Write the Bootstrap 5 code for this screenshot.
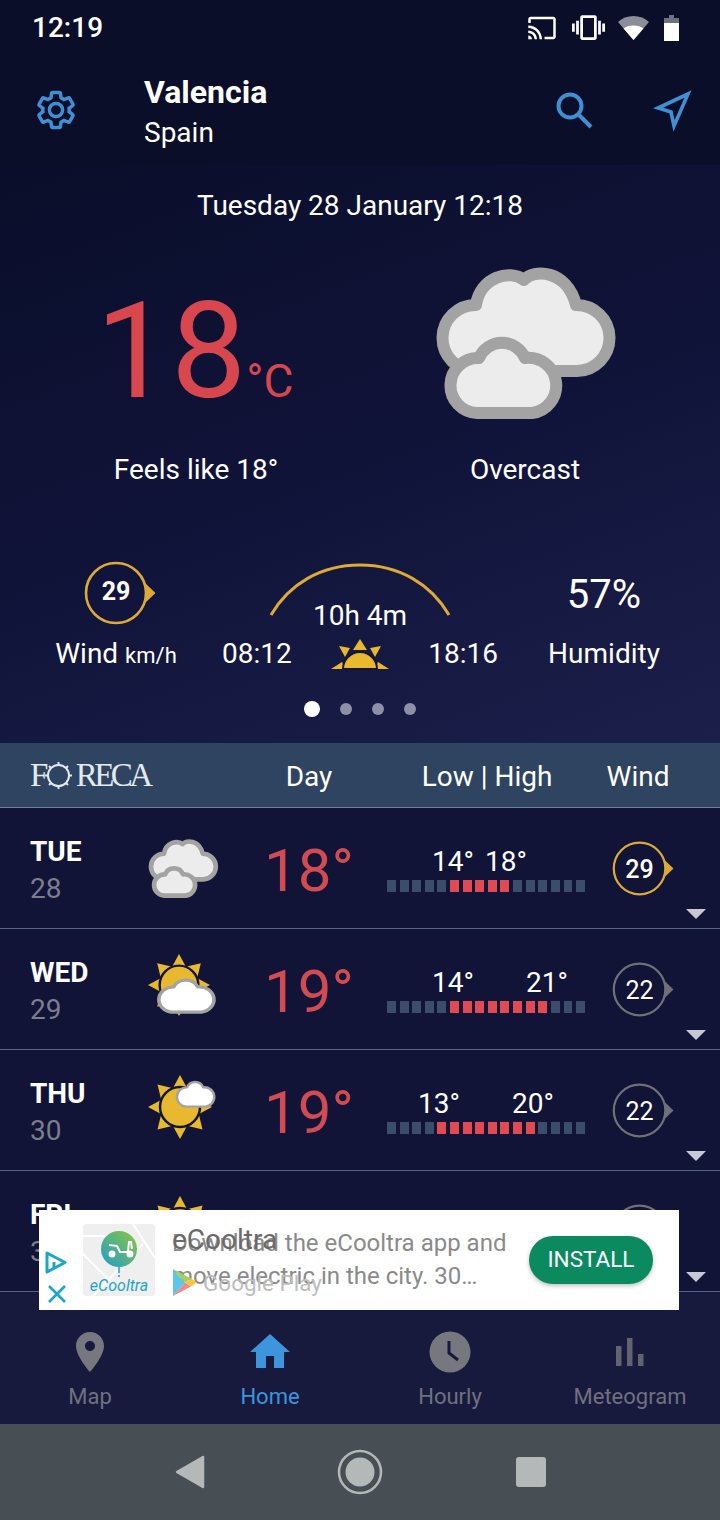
<!DOCTYPE html>
<html lang="en">
<head>
  <meta charset="UTF-8" />
  <meta name="viewport" content="width=device-width, initial-scale=1.0"/>
  <title>Foreca - Valencia</title>
  <link href="https://cdn.jsdelivr.net/npm/bootstrap@5.3.0/dist/css/bootstrap.min.css" rel="stylesheet"/>
  <style>
    body { width: 720px; height: 1520px; overflow: hidden; font-family: Roboto, "Liberation Sans", sans-serif; font-size: 28px; color: #fff; background: #14163a; }
    svg, symbol { overflow: visible; }
    .app-shell { width: 720px; height: 1520px; position: relative; background: #17193d; }
    .head-wrap { height: 165px; background: #0a0e28; }
    .status-strip { height: 55px; padding: 0 41px 0 32px; }
    .clock-text { font-weight: 500; line-height: 55px; }
    .status-icons { gap: 15px; }
    .vibrate-icon { margin-right: -2px; }
    .title-strip { height: 110px; padding: 0 0 0 34px; }
    .city-block { margin-left: 66px; margin-top: 7px; line-height: 40px; }
    .city-name { font-size: 32px; font-weight: 700; line-height: 38px; margin-top: -2px; margin-bottom: 2px; }
    .act-search { margin-right: 61px; }
    .act-locate { margin-right: 29px; }
    .hero-wrap { height: 578px; background: linear-gradient(160deg, #0a0e2a 0, #11143a 55%, #1c1f4a 100%); }
    .date-line { height: 81px; padding-top: 22px; line-height: 38px; text-align: center; }
    .now-grid { display: grid; grid-template-columns: 392px 266px; height: 244px; }
    .temp-big { font-size: 134px; line-height: 150px; font-weight: 400; color: #d9474e; margin-top: 31px; height: 176px; margin-left: -3px; white-space: nowrap; }
    .temp-unit { font-size: 46px; font-weight: 400; }
    .cloud-main { display: block; margin: 21px auto 34px; }
    .stats-grid { display: grid; grid-template-columns: 232px 256px 232px; height: 114px; padding-top: 71px; box-sizing: content-box; }
    .under-line { line-height: 34px; }
    .wind-label { margin-top: 12px; }
    .sun-block { width: 276px; margin-left: -10px; }
    .sun-arc { margin-top: 2px; }
    .sun-times { margin-top: 3px; }
    .sun-times svg { margin-bottom: 2px; }
    .day-length { margin-top: -18px; line-height: 36px; }
    .pct-text { font-size: 40px; line-height: 46px; margin-top: 11px; margin-bottom: 19px; }
    .wind-unit { font-size: 22px; }
    .pager-dots { gap: 20px; margin-top: 26px; height: 16px; }
    .pager-dot { width: 12px; height: 12px; background: #8e90a5; border-radius: 50%; }
    .pager-dot.is-on { width: 16px; height: 16px; background: #fff; }
    .table-head { height: 65px; padding-top: 4px; background: #2e4460; border-bottom: 1px solid #6d7ea3; display: grid; grid-template-columns: 232px 154px 202px 100px; align-items: center; text-align: center; }
    .foreca-logo { font-family: "Liberation Serif", serif; font-size: 33px; letter-spacing: -3.6px; padding-left: 30px; margin-top: -4px; text-align: left; line-height: 1; color: #e4e9f0; white-space: nowrap; }
    .foreca-logo svg { margin: 0 4px 0 0; vertical-align: -3px; }
    .fc-row { height: 121px; border-bottom: 1px solid #57648c; display: grid; grid-template-columns: 148px 118px 121px 225px 80px; align-items: center; position: relative; background: rgba(16, 17, 52, .7); }
    .fc-day { padding-left: 30px; line-height: 37px; margin-top: 4px; }
    .fc-day b { display: block; font-weight: 700; }
    .fc-day span { color: #7c7e8e; }
    .fc-icon-up { margin-top: -10px; }
    .fc-icon-mid { margin-top: -6px; }
    .fc-temp { font-size: 60px; color: #d04c52; line-height: 1; margin-top: 6px; margin-left: -2px; }
    .fc-range { margin-top: 2px; }
    .low-high { line-height: 36px; margin-top: -2px; display: flex; }
    .seg-bar { display: flex; gap: 3.67px; width: 198px; }
    .seg-bar i { width: 9px; height: 12px; background: #3a4e6b; display: block; }
    .seg-bar i.is-hot { background: #e04a52; }
    .wind-badge { position: relative; color: #dcaa36; display: block; }
    .wind-badge span { position: absolute; font-weight: 500; color: #fff; text-align: center; }
    .wind-lg { width: 72px; height: 64px; margin-left: 84px; }
    .wind-lg span { left: 2px; width: 60px; top: 15px; font-size: 25px; line-height: 32px; font-weight: 700; }
    .wind-sm { width: 62px; height: 55px; }
    .wind-sm span { left: 1px; width: 53px; top: 14px; font-size: 25px; line-height: 29px; }
    .wind-gray { color: #6f7078; }
    .wind-gray span { font-weight: 400; }
    .row-caret { position: absolute; right: 14px; bottom: 9px; width: 0; height: 0; border-left: 10px solid transparent; border-right: 10px solid transparent; border-top: 10px solid #c7c8d4; }
    .tab-strip { height: 132px; background: #17193d; padding-top: 36px; }
    .tab-item { width: 180px; text-align: center; font-size: 22px; color: #6f7180; line-height: 30px; }
    .tab-item svg { display: block; margin: 0 auto 6px; }
    .tab-item.is-active { color: #3d95dc; }
    .sys-strip { height: 96px; background: #484f54; gap: 132.5px; }
    .ad-box { position: absolute; left: 39px; top: 1210px; width: 640px; height: 100px; background: #fff; color: #8a8a8a; }
    .ad-box > * { position: absolute; }
    .ad-choice { left: 5px; top: 41px; }
    .ad-close { left: 8px; top: 74px; }
    .ad-art { left: 44px; top: 14px; }
    .ad-play { left: 134px; top: 59px; }
    .ad-desc { left: 133px; top: 17px; width: 340px; font-size: 24px; line-height: 33px; white-space: nowrap; }
    .ad-name { left: 133px; top: 13px; font-size: 28px; line-height: 34px; color: #6a6a6a; }
    .ad-store { left: 164px; top: 57px; font-size: 22.5px; line-height: 32px; color: #bdbdbd; }
    .ad-install { left: 490px; top: 26px; width: 124px; height: 48px; border-radius: 24px; background: #0b8a5f; color: #fff; border: 0; padding: 0; font-size: 22.5px; box-shadow: 0 2px 4px rgba(0,0,0,.25); }
  </style>
</head>
<body>
<svg width="0" height="0" class="position-absolute">
  <symbol id="cloud-big" viewBox="0 0 180 152">
    <path d="M40 104A33 33 0 0 1 41 38C45 10 75 2 89 13C98 2 132 2 141 38A33 33 0 0 1 142 104Z" fill="#ececec" stroke="#a3a3a3" stroke-width="12" stroke-linejoin="round"/>
    <path d="M42 146A27.500 27.500 0 0 1 44 91A25 25 0 0 1 90 91A27.500 27.500 0 0 1 97 146Z" fill="#ececec" stroke="#a3a3a3" stroke-width="12" stroke-linejoin="round"/>
  </symbol>
  <symbol id="cloud-one" viewBox="10 67 119 83" preserveAspectRatio="none">
    <path d="M42 146A27.500 27.500 0 0 1 44 91A25 25 0 0 1 90 91A27.500 27.500 0 0 1 97 146Z" fill="#fff" stroke="#a3a3a3" stroke-width="7" stroke-linejoin="round"/>
  </symbol>
  <symbol id="sun-rays" viewBox="0 0 64 64">
    <g fill="#e8b92f">
      <path d="M32 0l7 13H25z"/><path d="M32 64l7-13H25z"/><path d="M0 32l13-7v14z"/><path d="M64 32l-13-7v14z"/>
      <path d="M9.500 9.500l14.500 3.500-11 11z"/><path d="M54.500 9.500l-3.500 14.500L40 13z"/><path d="M9.500 54.500l3.500-14.500L24 51z"/><path d="M54.500 54.500l-14.500-3.500L51 40z"/>
    </g>
    <circle cx="32" cy="32" r="20" fill="#e8b92f" stroke="#15152f" stroke-width="2.500"/>
  </symbol>
  <symbol id="wind-mark" viewBox="0 0 72 64">
    <circle cx="32" cy="32" r="30" fill="none" stroke="currentColor" stroke-width="2.600"/>
    <path d="M60 21L71.500 32L60 43A30 30 0 0 0 60 21Z" fill="currentColor"/>
  </symbol>
</svg>

<div class="app-shell d-flex flex-column">
  <div class="head-wrap">
    <div class="status-strip d-flex justify-content-between align-items-center">
      <span class="clock-text">12:19</span>
      <div class="status-icons d-flex align-items-center">
        <svg width="30" height="30" viewBox="0 0 24 24" fill="#fff"><path d="M21 3H3c-1.100 0-2 .9-2 2v3h2V5h18v14h-7v2h7c1.100 0 2-.9 2-2V5c0-1.100-.9-2-2-2zM1 18v3h3c0-1.660-1.340-3-3-3zm0-4v2c2.760 0 5 2.240 5 5h2c0-3.870-3.130-7-7-7zm0-4v2c4.970 0 9 4.030 9 9h2c0-6.080-4.930-11-11-11z"/></svg>
        <svg class="vibrate-icon" width="33" height="33" viewBox="0 0 24 24" fill="#fff"><path d="M0 15h2V9H0v6zm3 2h2V7H3v10zm19-8v6h2V9h-2zm-3 8h2V7h-2v10zM16.500 3h-9C6.670 3 6 3.670 6 4.500v15c0 .83.670 1.500 1.500 1.500h9c.83 0 1.500-.67 1.500-1.500v-15c0-.83-.67-1.500-1.500-1.500zM16 19H8V5h8v14z"/></svg>
        <svg width="31" height="24" viewBox="0 0 31 24"><path d="M0 6C4 2 9.500 0 15.500 0S27 2 31 6L15.500 24z" fill="#8b8d99"/><path d="M5.500 12.500C8 10.500 11.500 9.500 15.500 9.500s7.500 1 10 3L15.500 24z" fill="#fff"/></svg>
        <svg width="15" height="26" viewBox="0 0 15 26"><path d="M5 0h5v3h5v5H0V3h5z" fill="#6f7180"/><path d="M0 8h15v18H0z" fill="#fff"/></svg>
      </div>
    </div>
    <div class="title-strip d-flex align-items-center">
      <svg width="44" height="44" viewBox="0 0 24 24" fill="none" stroke="#3f8fd2" stroke-width="1.900"><path d="M19.140 12.940c.04-.3.060-.61.060-.94 0-.32-.02-.64-.07-.94l2.030-1.580c.18-.14.23-.41.120-.61l-1.920-3.320c-.12-.22-.37-.29-.59-.22l-2.390.96c-.5-.38-1.030-.7-1.620-.94l-.36-2.540c-.04-.24-.24-.41-.48-.41h-3.840c-.24 0-.43.17-.47.41l-.36 2.540c-.59.24-1.130.57-1.620.94l-2.390-.96c-.22-.08-.47 0-.59.22L2.740 8.870c-.12.21-.08.47.12.61l2.030 1.580c-.05.3-.09.63-.09.94s.02.64.07.94l-2.030 1.580c-.18.14-.23.41-.12.61l1.920 3.320c.12.22.37.29.59.22l2.390-.96c.5.38 1.030.7 1.620.94l.36 2.540c.05.24.24.41.48.41h3.840c.24 0 .44-.17.47-.41l.36-2.540c.59-.24 1.130-.56 1.620-.94l2.390.96c.22.08.47 0 .59-.22l1.920-3.320c.12-.22.07-.47-.12-.61l-2.010-1.580zM12 15.600c-1.980 0-3.600-1.620-3.600-3.600s1.620-3.600 3.600-3.600 3.600 1.620 3.600 3.600-1.620 3.600-3.600 3.600z"/></svg>
      <div class="city-block flex-grow-1">
        <div class="city-name">Valencia</div>
        <div>Spain</div>
      </div>
      <svg class="act-search" width="36" height="36" viewBox="0 0 36 36" fill="none" stroke="#3f8fd2" stroke-width="4"><circle cx="14" cy="14" r="11.500"/><path d="M22 22l13 13"/></svg>
      <svg class="act-locate" width="38" height="38" viewBox="0 0 38 38" fill="none" stroke="#3f8fd2" stroke-width="3.600"><path d="M35 3L5 17l13 4 3 14z"/></svg>
    </div>
  </div>

  <div class="hero-wrap">
    <div class="date-line">Tuesday 28 January 12:18</div>
    <div class="now-grid">
      <div class="text-center">
        <div class="temp-big">18<span class="temp-unit">°C</span></div>
        <div class="under-line">Feels like 18°</div>
      </div>
      <div class="text-center">
        <svg class="cloud-main" width="180" height="152"><use href="#cloud-big"/></svg>
        <div class="under-line">Overcast</div>
      </div>
    </div>
    <div class="stats-grid">
      <div class="text-center">
        <div class="wind-badge wind-lg">
          <svg width="72" height="64" class="d-block"><use href="#wind-mark"/></svg><span>29</span>
        </div>
        <div class="under-line wind-label">Wind <span class="wind-unit">km/h</span></div>
      </div>
      <div class="text-center">
        <div class="sun-block">
          <svg class="d-block mx-auto sun-arc" width="182" height="53" viewBox="0 0 182 53" fill="none" stroke="#dcaa36" stroke-width="3"><path d="M2 52C20 21 52 2 91 2s71 19 89 50"/></svg>
          <div class="day-length">10h 4m</div>
          <div class="sun-times d-flex justify-content-between align-items-end under-line">
            <span>08:12</span>
            <svg width="58" height="30" viewBox="0 0 58 30"><g fill="#e8b92f"><path d="M29 0l7 11H22z"/><path d="M8 7l11 2-5 9z"/><path d="M50 7l-11 2 5 9z"/><path d="M0 30l11-7 3 7z"/><path d="M58 30l-11-7-3 7z"/></g><path d="M12 30a17 17 0 0 1 34 0z" fill="#e8b92f" stroke="#15152f" stroke-width="2"/></svg>
            <span>18:16</span>
          </div>
        </div>
      </div>
      <div class="text-center">
        <div class="pct-text">57%</div>
        <div class="under-line">Humidity</div>
      </div>
    </div>
    <div class="pager-dots d-flex justify-content-center align-items-center">
      <div class="pager-dot is-on"></div><div class="pager-dot"></div><div class="pager-dot"></div><div class="pager-dot"></div>
    </div>
  </div>

  <div class="table-head">
    <div class="foreca-logo">F<svg width="27" height="27" viewBox="0 0 27 27" fill="none" stroke="#e4e9f0" stroke-width="2"><circle cx="13.500" cy="13.500" r="10.500"/><path d="M13.500 0v3M13.500 24v3M0 13.500h3M24 13.500h3M4 4l2 2M21 21l2 2M4 23l2-2M21 6l2-2"/></svg>RECA</div>
    <div>Day</div>
    <div>Low | High</div>
    <div>Wind</div>
  </div>

  <div class="fc-row">
    <div class="fc-day"><b>TUE</b><span>28</span></div>
    <svg width="70" height="59"><use href="#cloud-big"/></svg>
    <div class="fc-temp">18°</div>
    <div class="fc-range">
      <div class="low-high" style="padding-left:45px;gap:11px"><span>14°</span><span>18°</span></div>
      <div class="seg-bar" data-from="5" data-to="9"></div>
    </div>
    <div class="wind-badge wind-sm"><svg width="62" height="55" class="d-block"><use href="#wind-mark"/></svg><span>29</span></div>
    <div class="row-caret"></div>
  </div>
  <div class="fc-row">
    <div class="fc-day"><b>WED</b><span>29</span></div>
    <svg class="fc-icon-up" width="70" height="60" viewBox="0 0 70 60"><use href="#sun-rays" width="62" height="62"/><use href="#cloud-one" x="8" y="22" width="62" height="38"/></svg>
    <div class="fc-temp">19°</div>
    <div class="fc-range">
      <div class="low-high" style="padding-left:45px;gap:52px"><span>14°</span><span>21°</span></div>
      <div class="seg-bar" data-from="5" data-to="12"></div>
    </div>
    <div class="wind-badge wind-sm wind-gray"><svg width="62" height="55" class="d-block"><use href="#wind-mark"/></svg><span>22</span></div>
    <div class="row-caret"></div>
  </div>
  <div class="fc-row">
    <div class="fc-day"><b>THU</b><span>30</span></div>
    <svg class="fc-icon-mid" width="70" height="64" viewBox="0 0 70 64"><use href="#sun-rays" width="64" height="64"/><use href="#cloud-one" x="27" y="4" width="42" height="29"/></svg>
    <div class="fc-temp">19°</div>
    <div class="fc-range">
      <div class="low-high" style="padding-left:31px;gap:52px"><span>13°</span><span>20°</span></div>
      <div class="seg-bar" data-from="4" data-to="11"></div>
    </div>
    <div class="wind-badge wind-sm wind-gray"><svg width="62" height="55" class="d-block"><use href="#wind-mark"/></svg><span>22</span></div>
    <div class="row-caret"></div>
  </div>
  <div class="fc-row">
    <div class="fc-day"><b>FRI</b><span>31</span></div>
    <svg class="fc-icon-mid" width="70" height="64" viewBox="0 0 70 64"><use href="#sun-rays" width="64" height="64"/></svg>
    <div class="fc-temp">19°</div>
    <div class="fc-range">
      <div class="low-high" style="padding-left:31px;gap:52px"><span>13°</span><span>20°</span></div>
      <div class="seg-bar" data-from="4" data-to="11"></div>
    </div>
    <div class="wind-badge wind-sm wind-gray"><svg width="62" height="55" class="d-block"><use href="#wind-mark"/></svg><span>22</span></div>
    <div class="row-caret"></div>
  </div>

  <div class="tab-strip d-flex">
    <div class="tab-item">
      <svg width="48" height="48" viewBox="0 0 24 24" fill="#77787f"><path d="M12 2C8.130 2 5 5.130 5 9c0 5.250 7 13 7 13s7-7.750 7-13c0-3.870-3.130-7-7-7zm0 9.500c-1.380 0-2.500-1.120-2.500-2.500s1.120-2.500 2.500-2.500 2.500 1.120 2.500 2.500-1.120 2.500-2.500 2.500z"/></svg>
      Map
    </div>
    <div class="tab-item is-active">
      <svg width="48" height="48" viewBox="0 0 24 24" fill="#3d95dc"><path d="M10 20v-6h4v6h5v-8h3L12 3 2 12h3v8z"/></svg>
      Home
    </div>
    <div class="tab-item">
      <svg width="48" height="48" viewBox="0 0 48 48"><circle cx="24" cy="24" r="20.500" fill="#77787f"/><path d="M23 13v12l9 7" fill="none" stroke="#17193d" stroke-width="3"/></svg>
      Hourly
    </div>
    <div class="tab-item">
      <svg width="48" height="48" viewBox="0 0 48 48" fill="#62636f"><path d="M10 18h5.500v20H10zM21 10h5.500v28H21zM32 26h5.500v12H32z"/></svg>
      Meteogram
    </div>
  </div>

  <div class="sys-strip d-flex justify-content-center align-items-center">
    <svg width="30" height="34" viewBox="0 0 30 34"><path d="M28 2L2 17l26 15z" fill="#b4b8b9" stroke="#b4b8b9" stroke-width="2.500" stroke-linejoin="round"/></svg>
    <svg width="46" height="46" viewBox="0 0 46 46"><circle cx="23" cy="23" r="21" fill="none" stroke="#b4b8b9" stroke-width="2.500"/><circle cx="23" cy="23" r="14.500" fill="#b4b8b9"/></svg>
    <svg width="30" height="30" viewBox="0 0 30 30"><rect width="30" height="30" rx="3" fill="#b4b8b9"/></svg>
  </div>

  <div class="ad-box">
    <svg class="ad-choice" width="24" height="23" viewBox="0 0 24 23" fill="none" stroke="#1aa7c4"><path d="M3 2l18 9.500L3 21z" stroke-width="3" stroke-linejoin="round"/><path d="M10 11v6" stroke-width="3"/></svg>
    <svg class="ad-close" width="20" height="20" viewBox="0 0 20 20" fill="none" stroke="#1aa7c4" stroke-width="2.600"><path d="M2 2l16 16M18 2L2 18"/></svg>
    <svg class="ad-art" width="72" height="72" viewBox="0 0 72 72">
      <defs><linearGradient id="ecoo" x1="1" y1="0" x2="0" y2="1"><stop offset="0" stop-color="#8cc63f"/><stop offset="1" stop-color="#1f9ec9"/></linearGradient></defs>
      <rect width="72" height="72" rx="3" fill="#efefef"/>
      <path d="M0 30L30 60M50 0L72 34M10 72L60 20M0 12h30" stroke="#fff" stroke-width="2" fill="none"/>
      <circle cx="36" cy="25" r="18" fill="url(#ecoo)"/>
      <path d="M36 43v6M36 51v2" stroke="#1f9ec9" stroke-width="1.500"/>
      <path d="M26 21l8 1 3 6 8 0 1-10 2 0 1 7" fill="none" stroke="#fff" stroke-width="2"/>
      <circle cx="29" cy="30" r="3.500" fill="#fff"/><circle cx="47" cy="30" r="3.500" fill="#fff"/>
      <text x="36" y="67" text-anchor="middle" font-family="Roboto, sans-serif" font-style="italic" font-size="16" fill="#1fa3c8">eCooltra</text>
    </svg>
    <div class="ad-desc">Download the eCooltra app and<br>move electric in the city. 30…</div>
    <div class="ad-name">eCooltra</div>
    <svg class="ad-play" width="24" height="27" viewBox="0 0 24 27"><path d="M0 0l12 13.500L0 27z" fill="#5cc7e8"/><path d="M0 0l18 9.500-6 4z" fill="#a4cf5a"/><path d="M0 27l18-9.500-6-4z" fill="#ee8a8f"/><path d="M18 9.500l6 4-6 4-6-4z" fill="#f6c544"/></svg>
    <div class="ad-store">Google Play</div>
    <button class="ad-install" type="button">INSTALL</button>
  </div>
</div>

<script>
  // red part of the low-high bar comes from data-from / data-to
  document.querySelectorAll(".seg-bar").forEach(function (bar) {
    var from = +bar.dataset.from, to = +bar.dataset.to, html = "";
    for (var i = 0; i < 16; i++) {
      html += '<i class="' + (i >= from && i <= to ? "is-hot" : "") + '"></i>';
    }
    bar.innerHTML = html;
  });
</script>
<script src="https://cdn.jsdelivr.net/npm/bootstrap@5.3.0/dist/js/bootstrap.bundle.min.js"></script>
</body>
</html>
